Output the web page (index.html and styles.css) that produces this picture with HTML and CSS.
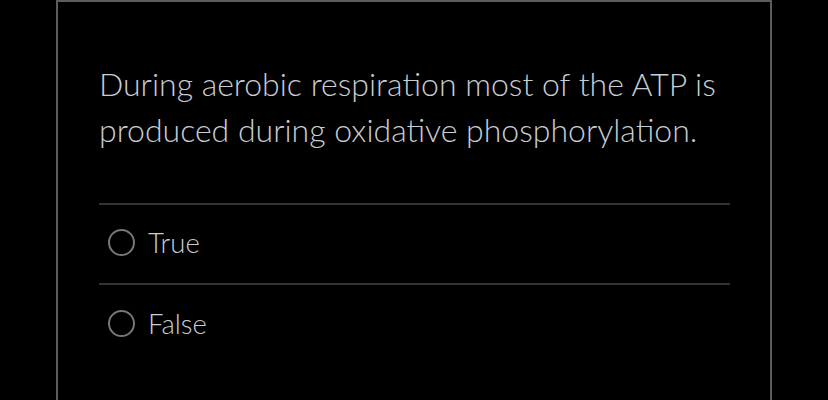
FILE: index.html
```html
<!DOCTYPE html>
<html>
<head>
<meta charset="utf-8">
<link rel="stylesheet" href="styles.css">
</head>
<body>
<div class="card">
  <p class="question">During aerobic respiration most of the ATP is produced during oxidative phosphorylation.</p>
  <ul class="options">
    <li class="option"><span class="radio"></span><span class="label">True</span></li>
    <li class="option"><span class="radio"></span><span class="label">False</span></li>
  </ul>
</div>
</body>
</html>
```
FILE: styles.css
```css
html, body {
  margin: 0;
  padding: 0;
  background: #000;
  height: 400px;
  overflow: hidden;
}
.card {
  margin-left: 56px;
  width: 716px;
  height: 420px;
  border: 2px solid #5c5c5c;
  border-bottom: none;
  padding: 0 40px 0 41px;
  box-sizing: border-box;
  font-family: Lato, "Open Sans", sans-serif;
  font-weight: 300;
  color: #c8ccd4;
}
.question {
  margin: 0;
  padding-top: 59px;
  font-size: 32px;
  line-height: 46px;
  padding-bottom: 50px;
  border-bottom: 2px solid #333;
}
.options {
  list-style: none;
  margin: 0;
  padding: 0;
}
.option {
  display: flex;
  align-items: center;
  gap: 13px;
  padding-left: 9px;
  padding-bottom: 4px;
  box-sizing: border-box;
  height: 80px;
  border-bottom: 2px solid #333;
  font-size: 27.5px;
}
.option:last-child {
  border-bottom: none;
}
.radio {
  flex: none;
  width: 23px;
  height: 23px;
  border: 2.5px solid #777;
  border-radius: 50%;
}
```
